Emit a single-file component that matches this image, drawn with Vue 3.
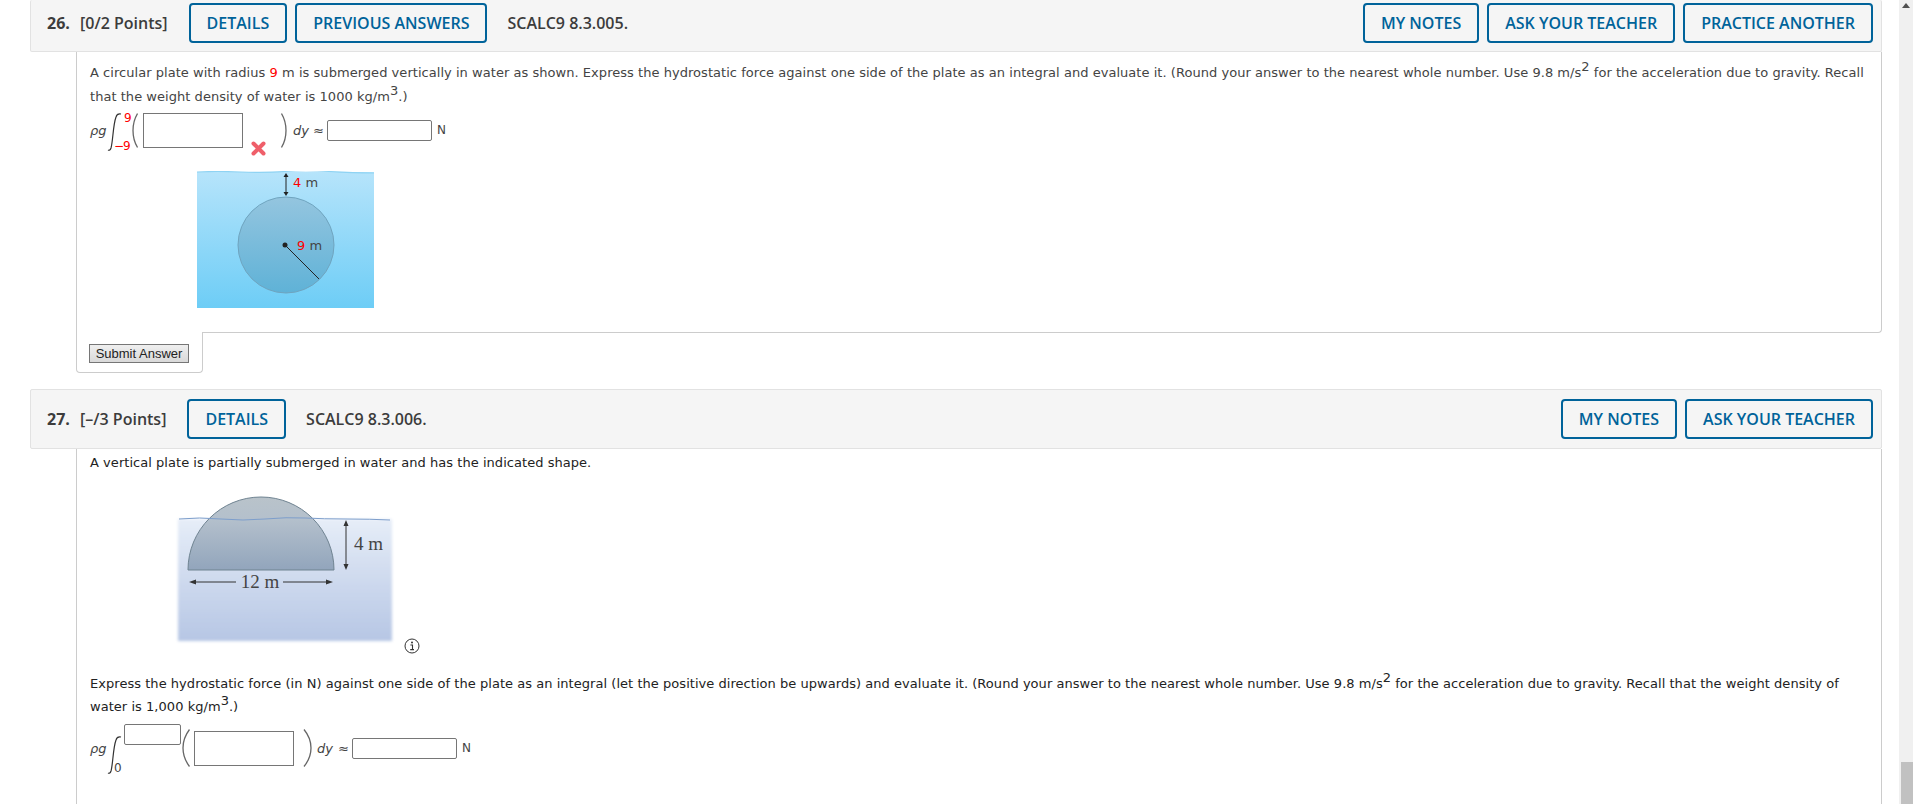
<script setup>
const wave1 = "M0 1 Q20 0 44 1 T88 0.5 T132 0.5 T177 2";
const wave2 = "M4 24 Q24 22 46 24 T90 24 T130 23 T172 24 T215 25";
</script>

<template>
  <div class="page">
    <main class="content">
      <!-- question 26 -->
      <section class="question">
        <header class="q-head">
          <span class="q-num">26.</span>
          <span class="q-points">[0/2 Points]</span>
          <button class="btn">DETAILS</button>
          <button class="btn">PREVIOUS ANSWERS</button>
          <span class="q-code">SCALC9 8.3.005.</span>
          <div class="q-actions">
            <button class="btn">MY NOTES</button>
            <button class="btn">ASK YOUR TEACHER</button>
            <button class="btn">PRACTICE ANOTHER</button>
          </div>
        </header>

        <div class="q-body body-26">
          <p class="txt">A circular plate with radius <span class="red">9</span> m is submerged vertically in water as shown. Express the hydrostatic force against one side of the plate as an integral and evaluate it. (Round your answer to the nearest whole number. Use 9.8 m/s<sup>2</sup> for the acceleration due to gravity. Recall<br />that the weight density of water is 1000 kg/m<sup>3</sup>.)</p>

          <div class="math row-26">
            <i class="rho">ρg</i>
            <svg class="int-sign" width="15" height="38" viewBox="0 0 15 38">
              <path d="M1 37 Q3 38 4 35 C6 28 6 12 9 4 Q10 0 14 1" fill="none" stroke="#333" stroke-width="1.2" />
            </svg>
            <div class="limits red">
              <span class="up">9</span>
              <span class="low">−9</span>
            </div>
            <svg class="paren" width="6" height="35" viewBox="0 0 6 35">
              <path d="M5.5 0.5 Q1 8 1 17.5 Q1 27 5.5 34.5" fill="none" stroke="#666" stroke-width="1.3" />
            </svg>
            <input class="box large" type="text" />
            <div class="mark-slot">
              <svg class="mark" width="15" height="15" viewBox="0 0 15 15">
                <path d="M2.5 2.5 L12.5 12.5 M12.5 2.5 L2.5 12.5" stroke="#ef5f6a" stroke-width="4" stroke-linecap="round" />
              </svg>
            </div>
            <svg class="paren" width="6" height="35" viewBox="0 0 6 35">
              <path d="M0.5 0.5 Q5 8 5 17.5 Q5 27 0.5 34.5" fill="none" stroke="#666" stroke-width="1.3" />
            </svg>
            <i class="dy">dy</i>
            <span class="approx">≈</span>
            <input class="box wide" type="text" />
            <span class="unit">N</span>
          </div>

          <svg class="fig-circle" width="177" height="137" viewBox="0 0 177 137">
            <defs>
              <linearGradient id="waterA" x1="0" y1="0" x2="0" y2="1">
                <stop offset="0" stop-color="#b6e4fb" />
                <stop offset="1" stop-color="#6dcdf6" />
              </linearGradient>
              <linearGradient id="plateA" x1="0" y1="0" x2="0" y2="1">
                <stop offset="0" stop-color="#94c5df" />
                <stop offset="1" stop-color="#5fb2d7" />
              </linearGradient>
            </defs>
            <rect y="1" width="177" height="136" fill="url(#waterA)" />
            <path :d="wave1" fill="none" stroke="#8fd3f3" stroke-width="1.2" />
            <circle cx="89" cy="74" r="48" fill="url(#plateA)" stroke="#6fa4bf" stroke-width="1" />
            <path d="M89 4 V23" stroke="#222" stroke-width="1" />
            <path d="M86.5 6 L89 2 L91.5 6 Z M86.5 21 L89 25 L91.5 21 Z" fill="#222" />
            <text x="96" y="16" class="fig-txt"><tspan fill="#f00">4</tspan> m</text>
            <circle cx="88" cy="74" r="2.5" fill="#222" />
            <path d="M88 74 L122 108" stroke="#222" stroke-width="1" />
            <text x="100" y="79" class="fig-txt"><tspan fill="#f00">9</tspan> m</text>
          </svg>
        </div>

        <div class="submit-tab">
          <button class="submit">Submit Answer</button>
        </div>
      </section>

      <!-- question 27 -->
      <section class="question">
        <header class="q-head tall">
          <span class="q-num">27.</span>
          <span class="q-points">[–/3 Points]</span>
          <button class="btn">DETAILS</button>
          <span class="q-code">SCALC9 8.3.006.</span>
          <div class="q-actions">
            <button class="btn">MY NOTES</button>
            <button class="btn">ASK YOUR TEACHER</button>
          </div>
        </header>

        <div class="q-body body-27">
          <p class="txt dark">A vertical plate is partially submerged in water and has the indicated shape.</p>

          <div class="fig-row">
            <svg class="fig-dome" width="220" height="150" viewBox="0 0 220 150">
              <defs>
                <linearGradient id="waterB" x1="0" y1="0" x2="0" y2="1">
                  <stop offset="0" stop-color="#e6edf8" />
                  <stop offset="1" stop-color="#b6c6e4" />
                </linearGradient>
                <linearGradient id="plateB" x1="0" y1="0" x2="0" y2="1">
                  <stop offset="0" stop-color="#b9c3ca" />
                  <stop offset="0.3" stop-color="#b4c0cc" />
                  <stop offset="1" stop-color="#92a5bc" />
                </linearGradient>
                <filter id="soft" x="-5%" y="-5%" width="110%" height="110%">
                  <feGaussianBlur stdDeviation="1.6" />
                </filter>
              </defs>
              <rect x="3" y="24" width="214" height="122" fill="url(#waterB)" filter="url(#soft)" />
              <path d="M13 75 A73 73 0 0 1 159 75 Z" fill="url(#plateB)" stroke="#6f8391" stroke-width="1" />
              <path :d="wave2" fill="none" stroke="#7d9ecb" stroke-width="1" />
              <path d="M171 29 V71" stroke="#333" stroke-width="1" />
              <path d="M168.5 31 L171 25 L173.5 31 Z M168.5 69 L171 75 L173.5 69 Z" fill="#333" />
              <text x="179" y="55" class="fig-serif">4 m</text>
              <path d="M18 87 H61 M108 87 H153" stroke="#333" stroke-width="1" />
              <path d="M21 84.5 L14 87 L21 89.5 Z M151 84.5 L158 87 L151 89.5 Z" fill="#333" />
              <text x="85" y="93" text-anchor="middle" class="fig-serif">12 m</text>
            </svg>
            <svg class="info" width="16" height="16" viewBox="0 0 16 16">
              <circle cx="8" cy="8" r="7" fill="none" stroke="#333" stroke-width="1" />
              <circle cx="8" cy="4.6" r="1" fill="#333" />
              <path d="M6.4 7 H8.5 V11.4 M6.2 11.6 H10" fill="none" stroke="#333" stroke-width="1.1" />
            </svg>
          </div>

          <p class="txt dark tight">Express the hydrostatic force (in N) against one side of the plate as an integral (let the positive direction be upwards) and evaluate it. (Round your answer to the nearest whole number. Use 9.8 m/s<sup>2</sup> for the acceleration due to gravity. Recall that the weight density of<br />water is 1,000 kg/m<sup>3</sup>.)</p>

          <div class="math row-27">
            <i class="rho">ρg</i>
            <svg class="int-sign low-int" width="15" height="38" viewBox="0 0 15 38">
              <path d="M1 37 Q3 38 4 35 C6 28 6 12 9 4 Q10 0 14 1" fill="none" stroke="#333" stroke-width="1.2" />
            </svg>
            <div class="limits plain">
              <input class="box upper" type="text" />
              <span class="low">0</span>
            </div>
            <svg class="paren" width="8" height="38" viewBox="0 0 8 38">
              <path d="M7.5 0.5 Q1 9 1 19 Q1 29 7.5 37.5" fill="none" stroke="#666" stroke-width="1.3" />
            </svg>
            <input class="box large gap-l" type="text" />
            <svg class="paren gap-r" width="9" height="38" viewBox="0 0 9 38">
              <path d="M1 0.5 Q8 9 8 19 Q8 29 1 37.5" fill="none" stroke="#666" stroke-width="1.3" />
            </svg>
            <i class="dy dy-27">dy</i>
            <span class="approx">≈</span>
            <input class="box wide" type="text" />
            <span class="unit">N</span>
          </div>
        </div>
      </section>
    </main>

    <aside class="scrollbar">
      <span class="arrow"></span>
      <span class="thumb"></span>
    </aside>
  </div>
</template>

<style scoped>
.page {
  display: flex;
  height: 804px;
  overflow: hidden;
  background: #fff;
}

.content {
  flex: 1;
  min-width: 0;
  padding: 0 17px 0 30px;
}

/* --- HEADER --- */
.q-head {
  display: flex;
  align-items: center;
  height: 52px;
  padding: 0 8px 5px 16px;
  box-sizing: border-box;
  background: #f5f5f5;
  border: 1px solid #e2e2e2;
  border-top: none;
  border-radius: 2px;
  font-family: "Open Sans", sans-serif;
  font-size: 16px;
  font-weight: 600;
  color: #3c3c3c;
}

.q-head.tall {
  height: 60px;
  padding-bottom: 0;
  border-top: 1px solid #e2e2e2;
}

.q-num {
  width: 33px;
  font-weight: 700;
}

.q-points {
  margin-right: 21px;
  white-space: nowrap;
}

.btn {
  height: 40px;
  padding: 0 16px;
  margin-right: 8px;
  background: transparent;
  border: 2px solid #00639a;
  border-radius: 4px;
  color: #00639a;
  font-family: "Open Sans", sans-serif;
  font-size: 16px;
  font-weight: 600;
  white-space: nowrap;
}

.q-code {
  margin-left: 12px;
  white-space: nowrap;
}

.q-actions {
  display: flex;
  margin-left: auto;
}

.q-actions .btn {
  margin: 0 0 0 8px;
}

/* --- BODY --- */
.q-body {
  margin-left: 46px;
  padding-left: 13px;
  background: #fff;
  border-left: 1px solid #ccc;
  border-right: 1px solid #ccc;
  font-family: "DejaVu Sans", sans-serif;
  font-size: 13px;
  color: #444;
}

.body-26 {
  height: 281px;
  padding-top: 9px;
  box-sizing: border-box;
  border-bottom: 1px solid #ccc;
  border-bottom-right-radius: 4px;
}

.body-27 {
  height: 400px;
  padding-top: 2px;
  box-sizing: border-box;
}

.txt {
  margin: 0;
  line-height: 24px;
  letter-spacing: 0.04px;
  white-space: nowrap;
}

.txt.dark {
  color: #222;
}

.txt.tight {
  line-height: 23px;
  margin-top: 17px;
}

sup {
  font-size: 13px;
  line-height: 0;
  vertical-align: 6px;
}

.red {
  color: #f00;
}

/* --- MATH --- */
.math {
  display: flex;
  align-items: center;
}

.row-26 {
  height: 42px;
}

.row-27 {
  height: 56px;
  margin-top: 2px;
}

.rho {
  width: 17px;
}

.int-sign {
  flex: none;
  margin-top: 4px;
}

.low-int {
  margin-top: 14px;
}

.dy {
  width: 15px;
  margin-left: 6px;
}

.dy-27 {
  margin-left: 5px;
}

.approx {
  margin-left: 5px;
  width: 14px;
}

.row-27 .approx {
  margin-left: 6px;
}

.unit {
  margin-left: 5px;
  font-size: 12px;
}

.limits {
  position: relative;
  flex: none;
  height: 100%;
  width: 10px;
  font-size: 12px;
}

.limits .up {
  position: absolute;
  left: 2px;
  top: 2px;
}

.limits .low {
  position: absolute;
  left: -8px;
  bottom: -2px;
  letter-spacing: -1px;
}

.limits.plain {
  width: 58px;
  margin-left: 2px;
}

.limits.plain .low {
  left: -10px;
  bottom: 1px;
}

.box {
  box-sizing: border-box;
  padding: 0;
  background: #fff;
  border: 1px solid #767676;
  border-radius: 2px;
}

.box.large {
  width: 100px;
  height: 35px;
  margin-left: 5px;
  border-radius: 0;
}

.box.wide {
  width: 105px;
  height: 21px;
}

.box.upper {
  position: absolute;
  left: 0;
  top: 4px;
  width: 57px;
  height: 21px;
}

.paren {
  flex: none;
}

.box.large.gap-l {
  margin-left: 4px;
}

.gap-r {
  margin-left: 9px;
}

.mark-slot {
  align-self: stretch;
  position: relative;
  flex: none;
  width: 38px;
}

.mark {
  position: absolute;
  left: 8px;
  bottom: -5px;
}

/* --- FIGURES --- */
.fig-circle {
  display: block;
  margin: 20px 0 0 107px;
}

.fig-txt {
  font-family: "DejaVu Sans", sans-serif;
  font-size: 13px;
  fill: #444;
}

.fig-serif {
  font-family: "Liberation Serif", serif;
  font-size: 19px;
  fill: #444;
}

.fig-row {
  display: flex;
  align-items: flex-end;
  height: 160px;
  margin: 20px 0 0 85px;
}

.fig-dome {
  display: block;
  align-self: flex-start;
}

.info {
  margin-left: 9px;
  margin-bottom: 1px;
}

/* --- SUBMIT --- */
.submit-tab {
  width: 127px;
  height: 41px;
  margin: -1px 0 16px 46px;
  padding: 12px 0 0 12px;
  box-sizing: border-box;
  background: #fff;
  border: 1px solid #ccc;
  border-top: none;
  border-radius: 0 0 4px 4px;
}

.submit {
  display: block;
  width: 100px;
  height: 19px;
  padding: 0;
  background: linear-gradient(#efefef, #d9d9d9);
  border: 1px solid #767676;
  color: #222;
  font-family: "Liberation Sans", sans-serif;
  font-size: 13px;
  line-height: 15px;
}

/* --- SCROLLBAR --- */
.scrollbar {
  position: relative;
  flex: none;
  width: 14px;
  background: #f0f0f0;
}

.arrow {
  position: absolute;
  top: 3px;
  left: 3px;
  width: 0;
  height: 0;
  border-left: 4px solid transparent;
  border-right: 4px solid transparent;
  border-bottom: 5px solid #505050;
}

.thumb {
  position: absolute;
  left: 2px;
  right: 0;
  top: 762px;
  bottom: 0;
  background: #c1c1c1;
}
</style>
